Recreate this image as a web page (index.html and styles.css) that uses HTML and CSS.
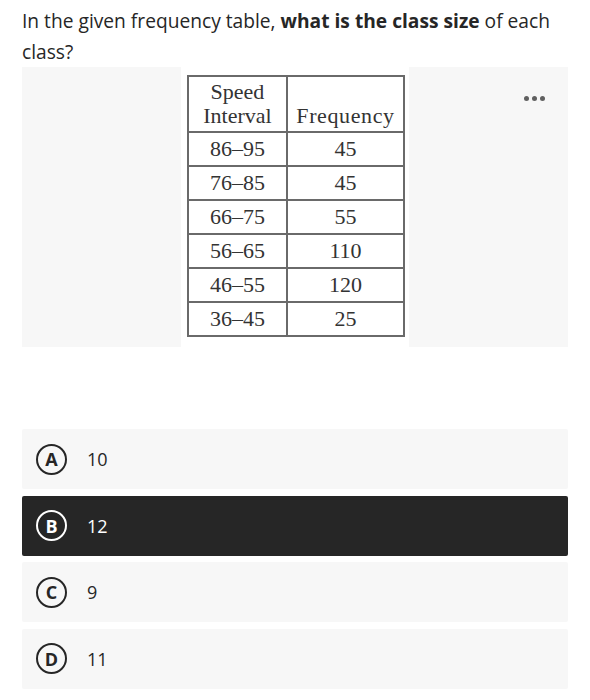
FILE: index.html
```html
<!DOCTYPE html>
<html>
<head>
<meta charset="utf-8">
<link rel="stylesheet" href="styles.css">
</head>
<body>
<div class="page">
  <p class="question">In the given frequency table, <b>what is the class size</b> of each class?</p>
  <div class="figure">
    <div class="image">
      <table class="freq">
        <thead>
          <tr><th class="c1">Speed<br>Interval</th><th class="c2">Frequency</th></tr>
        </thead>
        <tbody>
          <tr><td>86–95</td><td>45</td></tr>
          <tr><td>76–85</td><td>45</td></tr>
          <tr><td>66–75</td><td>55</td></tr>
          <tr><td>56–65</td><td>110</td></tr>
          <tr><td>46–55</td><td>120</td></tr>
          <tr><td>36–45</td><td>25</td></tr>
        </tbody>
      </table>
    </div>
    <div class="more"><span></span><span></span><span></span></div>
  </div>
  <div class="options">
    <div class="option"><span class="badge">A</span><span class="label">10</span></div>
    <div class="option selected"><span class="badge">B</span><span class="label">12</span></div>
    <div class="option"><span class="badge">C</span><span class="label">9</span></div>
    <div class="option"><span class="badge">D</span><span class="label">11</span></div>
  </div>
</div>
</body>
</html>
```
FILE: styles.css
```css
html, body {
  margin: 0;
  padding: 0;
  background: #ffffff;
}
.page {
  width: 546px;
  padding: 5px 22px 0 22px;
  font-family: "Open Sans", "Liberation Sans", sans-serif;
  color: #262626;
}
.question {
  margin: 0;
  font-size: 19.2px;
  line-height: 31px;
}
.question b {
  font-weight: 700;
}
.figure {
  position: relative;
  height: 280px;
  background: #f7f7f7;
  display: flex;
  justify-content: center;
}
.image {
  width: 228px;
  height: 280px;
  background: #ffffff;
  padding: 8px 0 0 6px;
  box-sizing: border-box;
}
.freq {
  border-collapse: collapse;
  font-family: "Liberation Serif", "DejaVu Serif", serif;
  font-size: 22px;
  color: #333333;
  width: 218px;
}
.freq th, .freq td {
  border: 2px solid #6a6a6a;
  text-align: center;
  font-weight: normal;
  padding: 0;
}
.freq th {
  height: 51px;
  line-height: 24px;
  vertical-align: bottom;
  padding-bottom: 3px;
}
.freq .c2 {
  letter-spacing: 0.6px;
}
.freq .c1 { width: 97px; }
.freq td {
  height: 32px;
  line-height: 30px;
}
.more {
  position: absolute;
  right: 23px;
  top: 29px;
  display: flex;
  gap: 3px;
}
.more span {
  width: 5px;
  height: 5px;
  border-radius: 50%;
  background: #606060;
}
.options {
  margin-top: 82px;
  display: flex;
  flex-direction: column;
  gap: 6.5px;
}
.option {
  height: 60px;
  background: #f7f7f7;
  display: flex;
  align-items: center;
  padding-left: 14px;
  gap: 20px;
  border-radius: 2px;
}
.option.selected {
  background: #262626;
  color: #ffffff;
}
.badge {
  flex: 0 0 auto;
  width: 27px;
  height: 27px;
  border: 2.5px solid #262626;
  border-radius: 50%;
  display: flex;
  align-items: center;
  justify-content: center;
  font-size: 18px;
  font-weight: 700;
  line-height: 1;
}
.option.selected .badge {
  border-color: #ffffff;
}
.label {
  font-size: 18px;
}
```
